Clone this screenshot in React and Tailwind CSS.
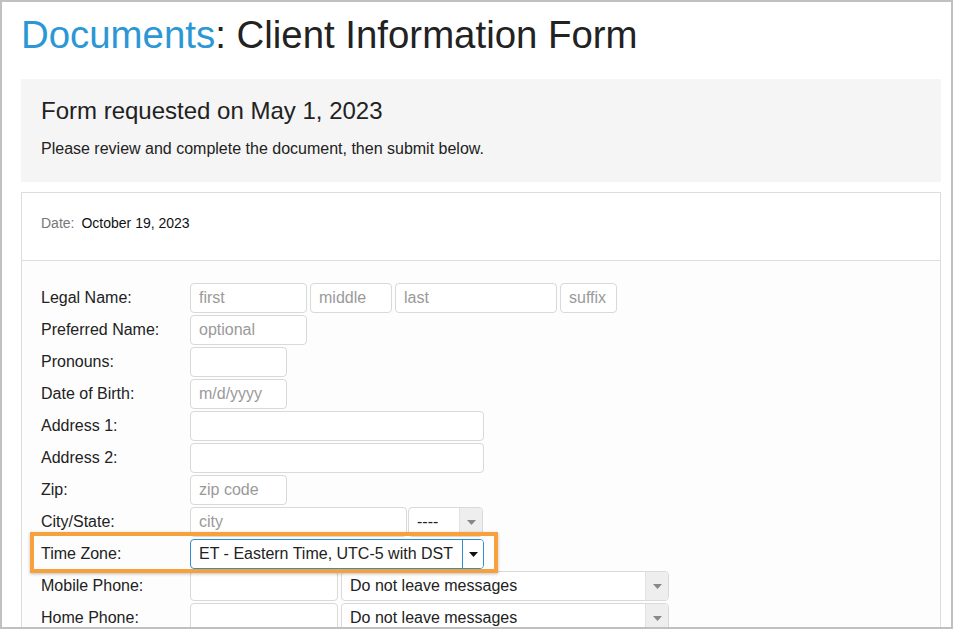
import React from 'react';

const Caret = ({ color = '#888' }) => (
  <svg width="9" height="5" viewBox="0 0 9 5">
    <path d="M0 0h9L4.5 5z" fill={color} />
  </svg>
);

const TextBox = ({ w, placeholder }) => (
  <input
    readOnly
    placeholder={placeholder}
    style={{ width: w }}
    className="h-[30px] shrink-0 rounded-[4px] border border-[#d9d9d9] bg-white px-[8px] text-[16px] text-[#222] outline-none placeholder:text-[#9a9a9a]"
  />
);

const Select = ({ w, value, focused }) => (
  <div
    style={{ width: w }}
    className={`flex h-[30px] shrink-0 items-center overflow-hidden rounded-[4px] border bg-white ${
      focused ? 'border-[#2f8fd0]' : 'border-[#d9d9d9]'
    }`}
  >
    <span className="flex-1 truncate pl-[8px] text-[16px] text-[#222]">{value}</span>
    {focused ? (
      <div className="flex h-full w-[21px] items-center justify-center border-l border-[#2f8fd0] bg-white">
        <Caret color="#111" />
      </div>
    ) : (
      <div className="flex h-full w-[23px] items-center justify-center border-l border-[#e2e2e2] bg-[#eeeeee]">
        <Caret />
      </div>
    )}
  </div>
);

const rows = [
  {
    label: 'Legal Name:',
    fields: [
      <TextBox key="f" w={117} placeholder="first" />,
      <TextBox key="m" w={82} placeholder="middle" />,
      <TextBox key="l" w={162} placeholder="last" />,
      <TextBox key="s" w={57} placeholder="suffix" />,
    ],
    gap: 'gap-[3px]',
  },
  { label: 'Preferred Name:', fields: [<TextBox key="p" w={117} placeholder="optional" />] },
  { label: 'Pronouns:', fields: [<TextBox key="p" w={97} />] },
  { label: 'Date of Birth:', fields: [<TextBox key="d" w={97} placeholder="m/d/yyyy" />] },
  { label: 'Address 1:', fields: [<TextBox key="a" w={294} />] },
  { label: 'Address 2:', fields: [<TextBox key="a" w={294} />] },
  { label: 'Zip:', fields: [<TextBox key="z" w={97} placeholder="zip code" />] },
  {
    label: 'City/State:',
    fields: [<TextBox key="c" w={217} placeholder="city" />, <Select key="s" w={75} value="----" />],
    gap: 'gap-[1px]',
  },
  {
    label: 'Time Zone:',
    fields: [<Select key="t" w={294} value="ET - Eastern Time, UTC-5 with DST" focused />],
    highlight: true,
  },
  {
    label: 'Mobile Phone:',
    fields: [<TextBox key="m" w={148} />, <Select key="s" w={328} value="Do not leave messages" />],
    gap: 'gap-[3px]',
  },
  {
    label: 'Home Phone:',
    fields: [<TextBox key="h" w={148} />, <Select key="s" w={328} value="Do not leave messages" />],
    gap: 'gap-[3px]',
  },
];

export default function App() {
  return (
    <div className="h-[629px] w-[953px] overflow-hidden border-2 border-[#c0c0c0] bg-white font-['Liberation_Sans',Arial,sans-serif] text-[#222]">
      <div className="pl-[19px] pr-[10px]">
        <h1 className="mt-[12px] text-[38.4px] leading-[42px] font-normal">
          <span className="text-[#2b97d5]">Documents</span>: Client Information Form
        </h1>

        {/* request banner */}
        <div className="mt-[23px] h-[103px] bg-[#f5f5f5] pl-[20px] pt-[18px]">
          <h2 className="text-[24px] leading-[28px] font-normal">Form requested on May 1, 2023</h2>
          <p className="mt-[15px] text-[16px] leading-[18px]">
            Please review and complete the document, then submit below.
          </p>
        </div>

        {/* form card */}
        <div className="mt-[10px] border border-[#dddddd] bg-white">
          <div className="h-[68px] border-b border-[#dddddd] pl-[19px] pt-[22px] text-[14px] leading-[17px]">
            <span className="text-[#777]">Date:</span>
            <span className="ml-[7px] text-[#111]">October 19, 2023</span>
          </div>

          <div className="bg-[#fdfdfd] pl-[19px] pt-[22px] pb-[20px]">
            {rows.map((row) => (
              <div key={row.label} className="relative mb-[2px] flex h-[30px] items-center">
                {row.highlight && (
                  <div className="pointer-events-none absolute left-[-11px] top-[-7px] z-10 h-[41px] w-[468px] border-4 border-[#f6a13b] shadow-[0_1px_3px_rgba(0,0,0,0.25)]" />
                )}
                <label className="w-[149px] shrink-0 text-[16px] text-[#222]">{row.label}</label>
                <div className={`flex ${row.gap || ''}`}>{row.fields}</div>
              </div>
            ))}
          </div>
        </div>
      </div>
    </div>
  );
}
